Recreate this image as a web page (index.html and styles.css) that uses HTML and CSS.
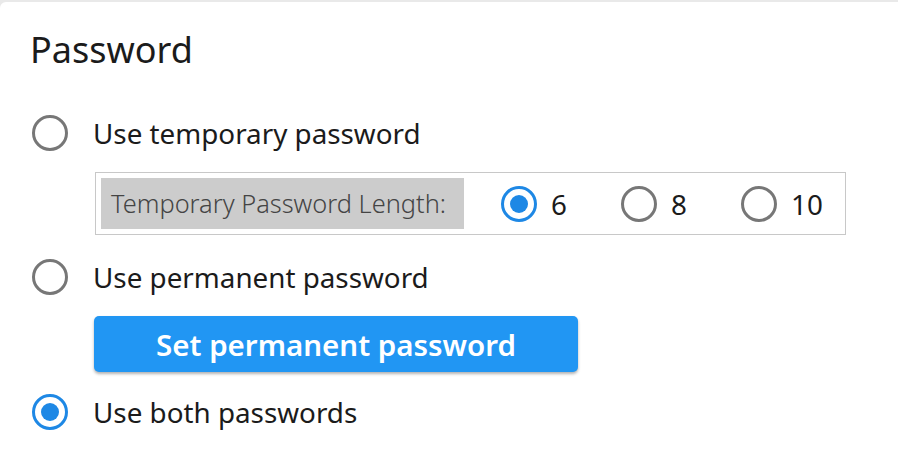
FILE: index.html
```html
<!DOCTYPE html>
<html><head>
<meta charset="utf-8">
<title>Password</title>
<link rel="stylesheet" href="styles.css"></head><body>
<div class="card">
    <h1 class="title">Password</h1>

    <div class="opt">
        <span class="radio"></span>
        <span class="optlabel">Use temporary password</span>
    </div>

    <div class="lenbox">
        <div class="lenlabel">Temporary Password Length:</div>
        <div class="lenopt"><span class="radio on"></span><span class="num">6</span></div>
        <div class="lenopt"><span class="radio"></span><span class="num">8</span></div>
        <div class="lenopt"><span class="radio"></span><span class="num">10</span></div>
    </div>

    <div class="opt opt2">
        <span class="radio"></span>
        <span class="optlabel">Use permanent password</span>
    </div>

    <button class="setbtn">Set permanent password</button>

    <div class="opt opt3">
        <span class="radio on"></span>
        <span class="optlabel">Use both passwords</span>
    </div>
</div>
</body></html>
```
FILE: styles.css
```css
body{margin:0;padding:0;background:#e9e9e9;font-family:"Noto Sans","Open Sans",sans-serif;color:#1b1b1b;}
.card{margin-top:2px;background:#fff;border-top-left-radius:6px;height:456px;padding:26px 0 0 30px;box-sizing:border-box;}
.title{margin:0;font-size:36px;font-weight:400;line-height:44px;}

.opt{display:flex;align-items:center;gap:25px;height:44px;margin:39px 0 0 2px;}
.opt2{margin-top:20px;}
.opt3{margin-top:18px;}
.optlabel{font-size:27.8px;}

.radio{display:inline-block;width:36px;height:36px;box-sizing:border-box;border:3.5px solid #777;border-radius:50%;flex:none;position:relative;}
.radio.on{border-color:#1e88e5;}
.radio.on::after{content:"";position:absolute;left:50%;top:50%;width:18px;height:18px;margin:-9px 0 0 -9px;border-radius:50%;background:#1e88e5;}

.lenbox{display:flex;align-items:center;width:751px;height:63px;box-sizing:border-box;margin:17px 0 0 65px;padding:5px;border:1px solid #c8c8c8;}
.lenlabel{flex:none;width:363px;height:51px;background:#cccccc;color:#444;font-size:25.4px;font-weight:300;line-height:51px;padding-left:10px;box-sizing:border-box;margin-right:37px;white-space:nowrap;}
.lenopt{flex:none;display:flex;align-items:center;gap:14px;width:120px;font-size:27.8px;}
.lenopt:last-child{width:auto;}

.setbtn{display:block;margin:17px 0 0 64px;width:484px;height:56px;border:none;border-radius:5px;background:#2196f3;color:#fff;font-family:inherit;font-size:29.5px;font-weight:600;box-shadow:0 2px 3px rgba(0,0,0,.3);}
```
